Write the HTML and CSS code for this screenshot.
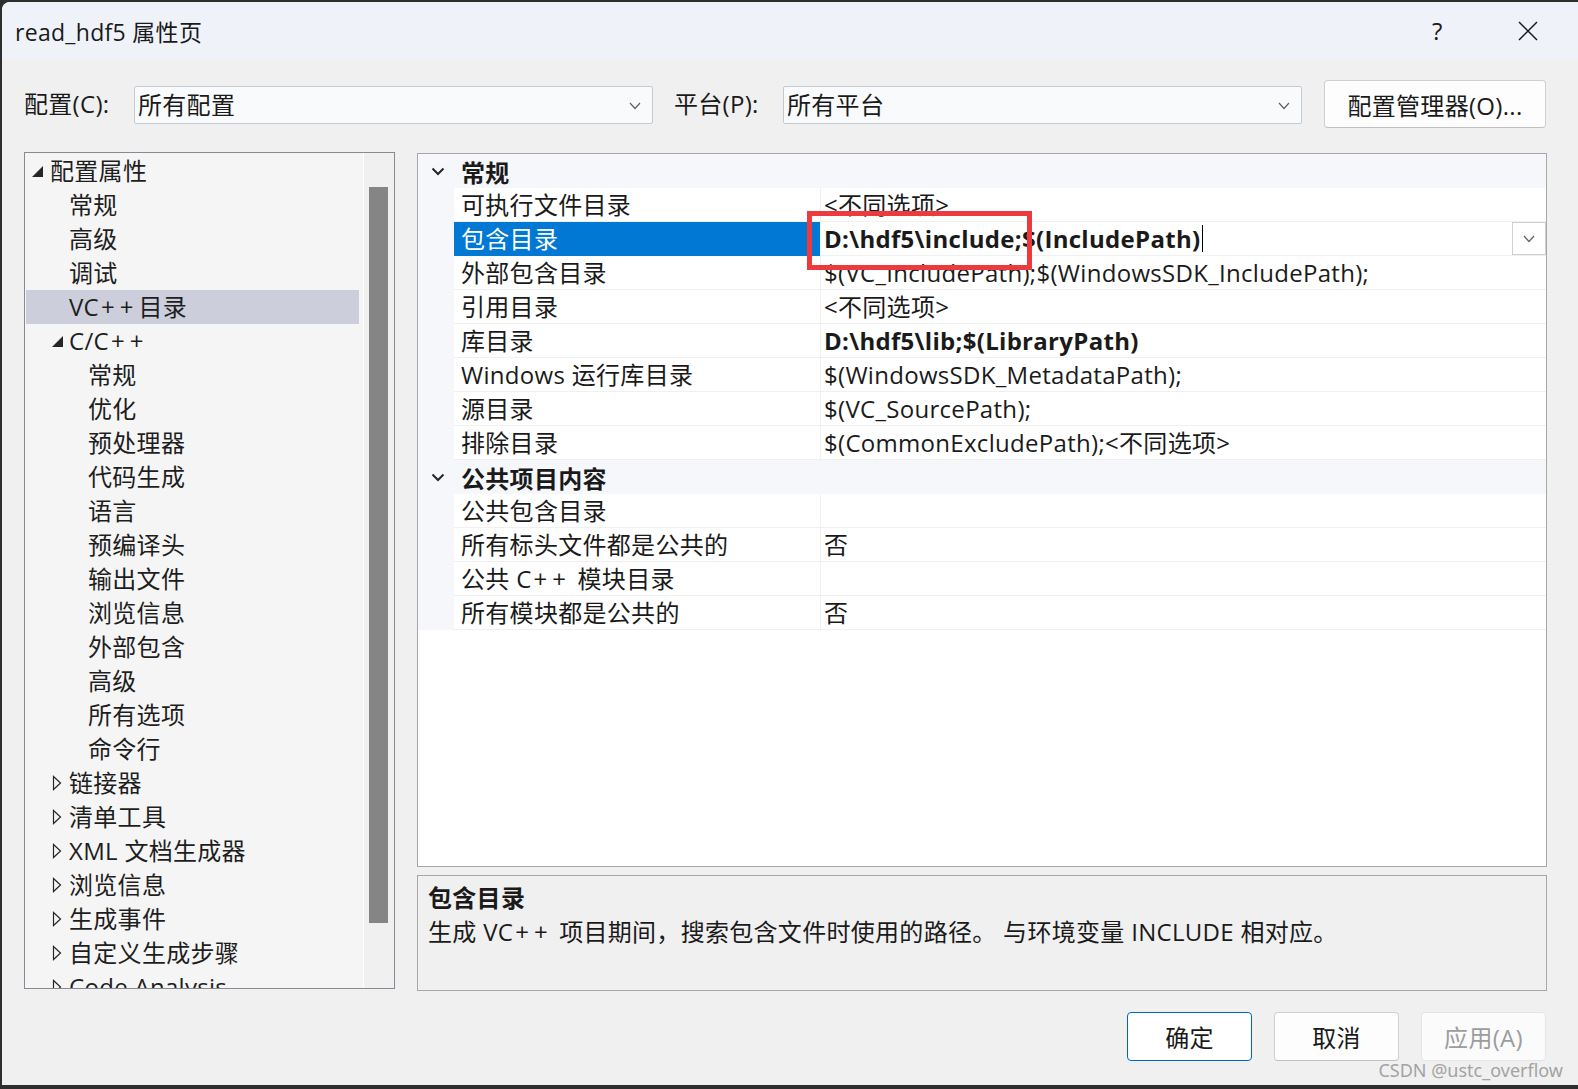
FILE: index.html
```html
<!DOCTYPE html>
<html lang="zh-CN">
<head>
  <meta charset="UTF-8" />
  <title>read_hdf5 属性页</title>
  <link rel="stylesheet" href="styles.css">
</head>
<body>
<div class="window">
  <div class="titlebar">
    <span class="title">read_hdf5 属性页</span>
    <span class="help">?</span>
    <span class="close">
      <svg width="20" height="20" viewBox="0 0 20 20"><path d="M1 1L19 19M19 1L1 19" stroke="#1a1a1a" stroke-width="1.5" fill="none"/></svg>
    </span>
  </div>

  <div class="toolbar">
    <span class="label cfg-label">配置(C):</span>
    <div class="select">所有配置
      <svg class="chev" width="12" height="8" viewBox="0 0 12 8"><path d="M1 1L6 6.5L11 1" stroke="#606060" stroke-width="1.2" fill="none"/></svg>
    </div>
    <span class="label plat-label">平台(P):</span>
    <div class="select">所有平台
      <svg class="chev" width="12" height="8" viewBox="0 0 12 8"><path d="M1 1L6 6.5L11 1" stroke="#606060" stroke-width="1.2" fill="none"/></svg>
    </div>
    <button class="btn mgr">配置管理器(O)...</button>
  </div>

  <div class="main">
    <div class="tree">
      <div class="tree-list">
        <div class="node l0"><span class="tw"><svg width="19" height="20" viewBox="0 0 19 20"><path d="M12 5L12 16L1 16Z" fill="#262626"/></svg></span>配置属性</div>
        <div class="node l1">常规</div>
        <div class="node l1">高级</div>
        <div class="node l1">调试</div>
        <div class="node l1 sel">VC<span class="pp">++</span> 目录</div>
        <div class="node l1t"><span class="tw"><svg width="19" height="20" viewBox="0 0 19 20"><path d="M13 5L13 16L2 16Z" fill="#262626"/></svg></span>C/C<span class="pp">++</span></div>
        <div class="node l2">常规</div>
        <div class="node l2">优化</div>
        <div class="node l2">预处理器</div>
        <div class="node l2">代码生成</div>
        <div class="node l2">语言</div>
        <div class="node l2">预编译头</div>
        <div class="node l2">输出文件</div>
        <div class="node l2">浏览信息</div>
        <div class="node l2">外部包含</div>
        <div class="node l2">高级</div>
        <div class="node l2">所有选项</div>
        <div class="node l2">命令行</div>
        <div class="node l1t"><span class="tw"><svg width="19" height="20" viewBox="0 0 19 20"><path d="M3.5 3.5L10.5 10L3.5 16.5Z" fill="none" stroke="#262626" stroke-width="1.2"/></svg></span>链接器</div>
        <div class="node l1t"><span class="tw"><svg width="19" height="20" viewBox="0 0 19 20"><path d="M3.5 3.5L10.5 10L3.5 16.5Z" fill="none" stroke="#262626" stroke-width="1.2"/></svg></span>清单工具</div>
        <div class="node l1t"><span class="tw"><svg width="19" height="20" viewBox="0 0 19 20"><path d="M3.5 3.5L10.5 10L3.5 16.5Z" fill="none" stroke="#262626" stroke-width="1.2"/></svg></span>XML 文档生成器</div>
        <div class="node l1t"><span class="tw"><svg width="19" height="20" viewBox="0 0 19 20"><path d="M3.5 3.5L10.5 10L3.5 16.5Z" fill="none" stroke="#262626" stroke-width="1.2"/></svg></span>浏览信息</div>
        <div class="node l1t"><span class="tw"><svg width="19" height="20" viewBox="0 0 19 20"><path d="M3.5 3.5L10.5 10L3.5 16.5Z" fill="none" stroke="#262626" stroke-width="1.2"/></svg></span>生成事件</div>
        <div class="node l1t"><span class="tw"><svg width="19" height="20" viewBox="0 0 19 20"><path d="M3.5 3.5L10.5 10L3.5 16.5Z" fill="none" stroke="#262626" stroke-width="1.2"/></svg></span>自定义生成步骤</div>
        <div class="node l1t"><span class="tw"><svg width="19" height="20" viewBox="0 0 19 20"><path d="M3.5 3.5L10.5 10L3.5 16.5Z" fill="none" stroke="#262626" stroke-width="1.2"/></svg></span>Code Analysis</div>
      </div>
      <div class="vscroll"><div class="thumb"></div></div>
    </div>

    <div class="right">
      <div class="grid">
        <div class="cat"><span class="cat-chev"><svg width="14" height="9" viewBox="0 0 14 9"><path d="M1.5 1.5L7 7L12.5 1.5" stroke="#262626" stroke-width="2" fill="none"/></svg></span>常规</div>
        <div class="row"><div class="gut"></div><div class="name">可执行文件目录</div><div class="val">&lt;不同选项&gt;</div></div>
        <div class="row active"><div class="gut"></div><div class="name">包含目录</div>
          <div class="val edit"><b>D:\hdf5\include;$(IncludePath)</b><span class="caret"></span>
            <span class="drop"><svg width="12" height="8" viewBox="0 0 12 8"><path d="M1 1L6 6.5L11 1" stroke="#606060" stroke-width="1.2" fill="none"/></svg></span>
          </div>
        </div>
        <div class="row"><div class="gut"></div><div class="name">外部包含目录</div><div class="val">$(VC_IncludePath);$(WindowsSDK_IncludePath);</div></div>
        <div class="row"><div class="gut"></div><div class="name">引用目录</div><div class="val">&lt;不同选项&gt;</div></div>
        <div class="row"><div class="gut"></div><div class="name">库目录</div><div class="val"><b>D:\hdf5\lib;$(LibraryPath)</b></div></div>
        <div class="row"><div class="gut"></div><div class="name">Windows 运行库目录</div><div class="val">$(WindowsSDK_MetadataPath);</div></div>
        <div class="row"><div class="gut"></div><div class="name">源目录</div><div class="val">$(VC_SourcePath);</div></div>
        <div class="row"><div class="gut"></div><div class="name">排除目录</div><div class="val">$(CommonExcludePath);&lt;不同选项&gt;</div></div>
        <div class="cat"><span class="cat-chev"><svg width="14" height="9" viewBox="0 0 14 9"><path d="M1.5 1.5L7 7L12.5 1.5" stroke="#262626" stroke-width="2" fill="none"/></svg></span>公共项目内容</div>
        <div class="row"><div class="gut"></div><div class="name">公共包含目录</div><div class="val"></div></div>
        <div class="row"><div class="gut"></div><div class="name">所有标头文件都是公共的</div><div class="val">否</div></div>
        <div class="row"><div class="gut"></div><div class="name">公共 C<span class="pp">++</span> 模块目录</div><div class="val"></div></div>
        <div class="row"><div class="gut"></div><div class="name">所有模块都是公共的</div><div class="val">否</div></div>
        <div class="mark"></div>
      </div>
      <div class="desc">
        <div class="desc-title">包含目录</div>
        <div class="desc-text">生成 VC<span class="pp">++</span> 项目期间，搜索包含文件时使用的路径。 与环境变量 INCLUDE 相对应。</div>
      </div>
    </div>
  </div>

  <div class="footer">
    <button class="btn ok">确定</button>
    <button class="btn">取消</button>
    <button class="btn off">应用(A)</button>
  </div>
  <div class="watermark">CSDN @ustc_overflow</div>
</div>
</body>
</html>
```

FILE: styles.css
```css
* { margin: 0; padding: 0; box-sizing: border-box; }
body {
  background: #2e2e2e;
  font-family: "Open Sans", "Noto Sans CJK SC", sans-serif;
  letter-spacing: 0.3px;
  color: #1a1a1a;
  overflow: hidden;
}
.window {
  position: relative;
  margin: 2px 0 0 2px;
  width: 1576px;
  height: 1083px;
  background: #f0f0f0;
  border-radius: 8px 0 0 0;
  overflow: hidden;
}
.pp { letter-spacing: 5px; padding-left: 2px; }

/* title bar */
.titlebar {
  height: 57px;
  background: #eff3f9;
  display: flex;
  align-items: center;
  padding: 0 40px 0 13px;
}
.title { font-size: 23px; flex: 1; }
.help { font-size: 24px; width: 86px; }
.close { width: 20px; display: flex; }

/* config row */
.toolbar {
  display: flex;
  align-items: flex-start;
  padding: 21px 0 0 22px;
  height: 69px;
}
.label { font-size: 24px; line-height: 48px; }
.cfg-label { width: 110px; }
.plat-label { width: 109px; margin-left: 21px; }
.select {
  width: 519px;
  height: 38px;
  margin-top: 6px;
  background: #f9fafb;
  border: 1px solid #c3cad3;
  border-radius: 2px;
  font-size: 24px;
  line-height: 35px;
  padding-left: 3px;
  position: relative;
}
.chev { position: absolute; right: 11px; top: 15px; }
.btn {
  font-family: inherit;
  letter-spacing: inherit;
  font-size: 24px;
  color: #1a1a1a;
  background: #fdfdfd;
  border: 1px solid #d0d0d0;
  border-bottom-color: #c0c0c0;
  border-radius: 4px;
  height: 49px;
  width: 125px;
}
.mgr { width: 222px; height: 48px; margin-left: 22px; }

/* tree + grid */
.main { display: flex; padding-left: 22px; margin-top: 24px; height: 839px; }
.tree {
  width: 371px;
  height: 837px;
  border: 1px solid #878a94;
  background: #f5f5f5;
  display: flex;
}
.tree-list { width: 338px; padding-top: 1px; overflow: hidden; }
.node {
  height: 34px;
  line-height: 34px;
  font-size: 24px;
  color: #1e1e1e;
  white-space: nowrap;
  display: flex;
  align-items: center;
  margin: 0 4px 0 1px;
}
.node.l0 { padding-left: 5px; }
.node.l1 { padding-left: 43px; }
.node.l1t { padding-left: 24px; }
.node.l2 { padding-left: 62px; }
.node.sel { background: #cccedb; }
.tw { width: 19px; height: 20px; display: flex; }
.vscroll {
  flex: 1;
  border-left: 1px solid #ffffff;
  background: #f0f0f0;
  padding: 34px 0 0 5px;
}
.thumb { width: 19px; height: 736px; background: #858585; }

.right { width: 1130px; margin-left: 22px; padding-top: 1px; }
.grid {
  position: relative;
  height: 714px;
  border: 1px solid #a7a7a7;
  background: #ffffff;
}
.cat {
  height: 34px;
  background: #f5f7fa;
  font-size: 24px;
  font-weight: bold;
  display: flex;
  align-items: center;
}
.cat-chev { width: 43px; padding-left: 13px; display: flex; }
.row {
  height: 34px;
  display: grid;
  grid-template-columns: 36px 366px 1fr;
  font-size: 24px;
}
.gut { background: #f5f7fa; }
.name, .val {
  border-bottom: 1px solid #f0f0f0;
  line-height: 33px;
  white-space: nowrap;
  overflow: hidden;
}
.name { padding-left: 7px; }
.val { border-left: 1px solid #f0f0f0; padding-left: 3px; }
.row.active .name { background: #0078d4; color: #ffffff; border-bottom-color: #0078d4; }
.val.edit { position: relative; display: flex; align-items: center; }
.caret { width: 1px; height: 27px; background: #000; margin-left: 2px; }
.drop {
  position: absolute;
  right: 0;
  top: 0;
  width: 34px;
  height: 33px;
  border: 1px solid #d0d0d0;
  background: #fff;
  display: flex;
  align-items: center;
  justify-content: center;
}
.mark {
  position: absolute;
  left: 389px;
  top: 57px;
  width: 225px;
  height: 59px;
  border: 5px solid #ef3a3d;
}

.desc {
  margin-top: 8px;
  height: 116px;
  border: 1px solid #a7a7a7;
  background: #f0f0f0;
  padding: 5px 0 0 10px;
  font-size: 24px;
  line-height: 34px;
}
.desc-title { font-weight: bold; }

/* buttons */
.footer {
  display: flex;
  justify-content: flex-end;
  gap: 22px;
  padding: 21px 32px 0 0;
}
.btn.ok { border: 1px solid #0067c0; background: #ffffff; }
.btn.off { background: #fbfbfb; border-color: #e5e5e5; color: #9d9d9d; }
.watermark {
  position: absolute;
  right: 15px;
  bottom: 3px;
  font-family: "Noto Sans", sans-serif;
  letter-spacing: 0;
  font-size: 18px;
  color: #a3a3a3;
}
```
